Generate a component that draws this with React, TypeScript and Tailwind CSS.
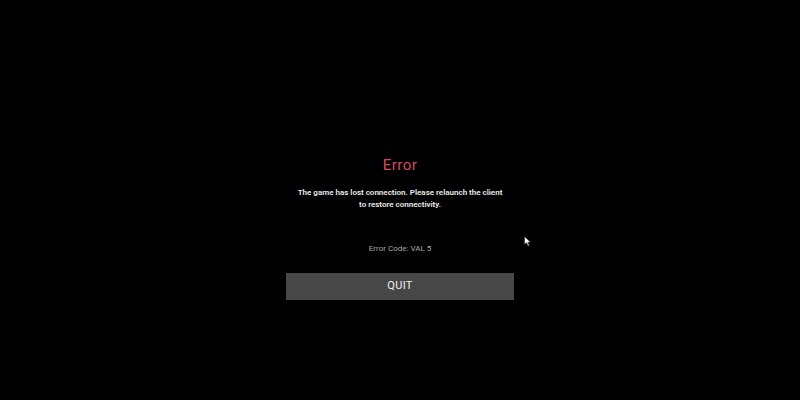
export default function App() {
  return (
    <div className="relative h-[400px] w-[800px] bg-black font-['Roboto','Liberation_Sans',sans-serif] text-white">
      <div className="flex flex-col items-center pt-[156px]">
        {/* heading */}
        <h1 className="text-[15px] leading-[18px] font-normal tracking-[0.5px] text-[#d8495d]">Error</h1>

        <p className="mt-[13px] text-center text-[8px] leading-[12px] font-semibold text-[#ececec]">
          The game has lost connection. Please relaunch the client
          <br />
          to restore connectivity.
        </p>

        <span className="mt-[32px] text-[8px] leading-[12px] text-[#a9a9a9]">Error Code: VAL 5</span>

        <button className="mt-[18px] h-[27px] w-[228px] bg-[#474747] text-[11px] font-normal tracking-[0.3px] text-[#f0f0f0]">
          QUIT
        </button>
      </div>

      {/* mouse pointer */}
      <svg className="absolute left-[524px] top-[236px]" width="8" height="11" viewBox="0 0 8 11">
        <path d="M0.5 0.5 L0.5 8.5 L2.5 6.8 L4 10 L5.3 9.4 L3.9 6.3 L6.6 6.2 Z" fill="#fff" stroke="#222" strokeWidth="0.6" />
      </svg>
    </div>
  );
}
